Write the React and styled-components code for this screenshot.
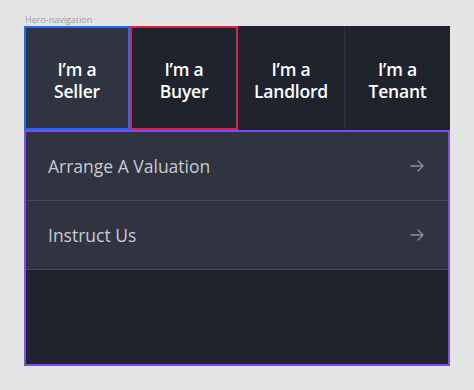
import React from 'react';
import styled, {createGlobalStyle} from 'styled-components';

const Global = createGlobalStyle`
  html, body {
    margin: 0;
    background: #e4e4e4;
  }
  body {
    font-family: "Open Sans", "Noto Sans", sans-serif;
  }
`;

const Page = styled.div`
  padding: 14px 0 0 24px;
`;

const Caption = styled.div`
  font-family: "Open Sans", sans-serif;
  font-size: 9px;
  line-height: 12px;
  color: #9a9a9a;
  padding-left: 1px;
`;

const Frame = styled.div`
  width: 426px;
  display: flex;
  flex-direction: column;
`;

const Tabs = styled.div`
  display: grid;
  grid-template-columns: 106px 108px 106px 106px;
  height: 104px;
  background: #1e232e;
`;

const Tab = styled.div`
  display: flex;
  align-items: center;
  justify-content: center;
  text-align: center;
  padding-top: 4px;
  color: #fff;
  font-size: 17.5px;
  font-weight: 600;
  line-height: 22px;
  letter-spacing: -0.2px;
  background: ${p => (p.active ? '#2f3440' : '#1e232e')};
  box-shadow: ${p => (p.outline ? `inset 0 0 0 2px ${p.outline}` : 'none')};
  border-left: ${p => (p.divider ? '1px solid #2c313b' : 'none')};
`;

const Panel = styled.div`
  height: 236px;
  box-sizing: border-box;
  border: 2px solid #7b4cf5;
  background: #1e232e;
  display: flex;
  flex-direction: column;
`;

const Row = styled.div`
  height: 68px;
  display: flex;
  align-items: center;
  justify-content: space-between;
  padding: 0 24px 0 22px;
  background: #2f3440;
  border-bottom: 1px solid #434852;
  color: #c8cbd1;
  font-size: 17.5px;
`;

const Arrow = () => (
  <svg width="14" height="12" viewBox="0 0 14 12" fill="none" stroke="#8b909a" strokeWidth="1.3" strokeLinecap="round" strokeLinejoin="round">
    <path d="M1 6h12M8 1l5 5-5 5" />
  </svg>
);

const tabs = [
  {label: 'Seller', active: true, outline: '#1d6cf2'},
  {label: 'Buyer', outline: '#d8234a'},
  {label: 'Landlord'},
  {label: 'Tenant', divider: true},
];

const links = ['Arrange A Valuation', 'Instruct Us'];

export default function App() {
  return (
    <Page>
      <Global />
      <Caption>Hero-navigation</Caption>
      <Frame>
        <Tabs>
          {tabs.map(t => (
            <Tab key={t.label} active={t.active} outline={t.outline} divider={t.divider}>
              I’m a<br />{t.label}
            </Tab>
          ))}
        </Tabs>
        <Panel>
          {links.map(l => (
            <Row key={l}>
              {l}
              <Arrow />
            </Row>
          ))}
        </Panel>
      </Frame>
    </Page>
  );
}
